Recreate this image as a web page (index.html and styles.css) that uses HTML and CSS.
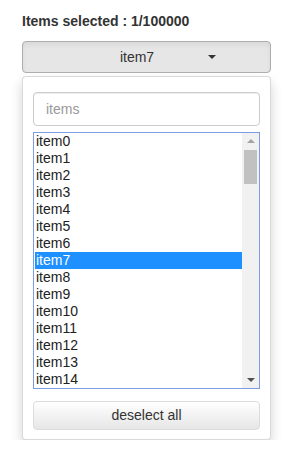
FILE: index.html
```html
<!DOCTYPE html>
<html>
<head>
<meta charset="utf-8">
<link rel="stylesheet" href="styles.css">
</head>
<body>
<div class="wrap">
  <div class="title">Items selected : 1/100000</div>
  <div class="dd">
    <div class="dd-btn">
      <span class="dd-label">item7</span>
      <span class="caret"></span>
    </div>
    <div class="panel">
      <div class="search">items</div>
      <div class="list">
        <div class="rows">
          <div class="row">item0</div>
          <div class="row">item1</div>
          <div class="row">item2</div>
          <div class="row">item3</div>
          <div class="row">item4</div>
          <div class="row">item5</div>
          <div class="row">item6</div>
          <div class="row sel">item7</div>
          <div class="row">item8</div>
          <div class="row">item9</div>
          <div class="row">item10</div>
          <div class="row">item11</div>
          <div class="row">item12</div>
          <div class="row">item13</div>
          <div class="row">item14</div>
        </div>
        <div class="sb">
          <div class="sb-arrow up"></div>
          <div class="sb-track"><div class="sb-thumb"></div></div>
          <div class="sb-arrow down"></div>
        </div>
      </div>
      <div class="deselect">deselect all</div>
    </div>
  </div>
</div>
</body>
</html>
```
FILE: styles.css
```css
html, body {
  margin: 0;
  padding: 0;
  background: #fff;
}
body {
  font-family: "Liberation Sans", Arial, sans-serif;
  color: #333;
}
.wrap {
  padding: 11px 27px 0 22px;
}
.title {
  font-size: 14px;
  font-weight: bold;
  line-height: 20px;
  height: 20px;
  margin-bottom: 10px;
}
.dd {
  position: relative;
}
.dd-btn {
  position: relative;
  box-sizing: border-box;
  height: 32px;
  border: 1px solid #adadad;
  border-radius: 4px;
  background: #e6e6e6;
  box-shadow: inset 0 3px 5px rgba(0,0,0,0.06);
  font-size: 14px;
  line-height: 30px;
  text-align: center;
  padding-right: 19px;
}
.caret {
  position: absolute;
  left: 185px;
  top: 13px;
  width: 0;
  height: 0;
  border-left: 4px solid transparent;
  border-right: 4px solid transparent;
  border-top: 4px solid #333;
}
.panel {
  margin-top: 3px;
  box-sizing: border-box;
  border: 1px solid rgba(0,0,0,0.15);
  border-radius: 4px;
  box-shadow: 0 6px 12px rgba(0,0,0,0.175);
  padding: 15px 10px 9px 10px;
  background: #fff;
}
.search {
  box-sizing: border-box;
  height: 34px;
  border: 1px solid #ccc;
  border-radius: 4px;
  padding: 0 12px;
  font-size: 14px;
  line-height: 32px;
  color: #999;
  box-shadow: inset 0 1px 1px rgba(0,0,0,0.075);
}
.list {
  margin-top: 6px;
  box-sizing: border-box;
  height: 257px;
  border: 1px solid #7b9de6;
  display: flex;
  overflow: hidden;
}
.rows {
  flex: 1;
  padding-left: 1px;
  overflow: hidden;
}
.row {
  height: 17px;
  line-height: 17px;
  font-size: 14px;
  color: #222;
  padding-left: 1px;
}
.row.sel {
  background: #1e90ff;
  color: #fff;
}
.sb {
  width: 17px;
  background: #f1f1f1;
  display: flex;
  flex-direction: column;
}
.sb-arrow {
  height: 17px;
  position: relative;
}
.sb-arrow.up::after, .sb-arrow.down::after {
  content: "";
  position: absolute;
  left: 5px;
  width: 0;
  height: 0;
  border-left: 4px solid transparent;
  border-right: 4px solid transparent;
}
.sb-arrow.up::after {
  top: 6px;
  border-bottom: 4px solid #a3a3a3;
}
.sb-arrow.down::after {
  top: 7px;
  border-top: 4px solid #505050;
}
.sb-track {
  flex: 1;
  padding: 0 2px;
}
.sb-thumb {
  margin-top: 0;
  height: 34px;
  background: #c1c1c1;
}
.deselect {
  margin-top: 12px;
  box-sizing: border-box;
  height: 29px;
  border: 1px solid #dcdcdc;
  border-radius: 4px;
  background: linear-gradient(#ffffff, #e6e6e6);
  font-size: 14px;
  line-height: 27px;
  text-align: center;
  color: #333;
}
```
